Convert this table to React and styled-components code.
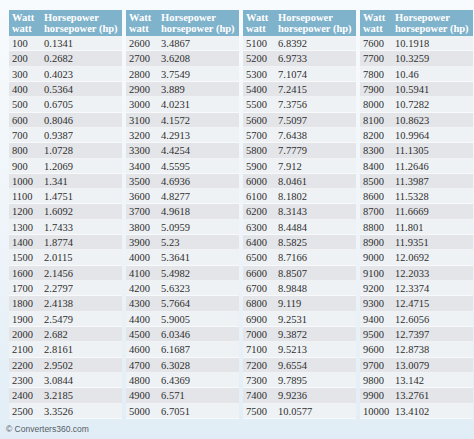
import React from 'react';
import styled, { createGlobalStyle } from 'styled-components';

const GlobalStyle = createGlobalStyle`
  html, body {
    margin: 0;
    padding: 0;
  }
  body {
    width: 474px;
    height: 439px;
    overflow: hidden;
  }
`;

const Page = styled.div`
  width: 474px;
  height: 439px;
  box-sizing: border-box;
  padding: 10px 0 0 9px;
  background: linear-gradient(180deg, #f8fbfd 0%, #eef4f9 55%, #e1edf6 100%);
  display: flex;
  flex-direction: column;
`;

const Tables = styled.div`
  display: flex;
  gap: 4px;
`;

const Table = styled.div`
  width: 113px;
  display: grid;
  grid-template-columns: 32px 1fr;
  font-family: 'Liberation Serif', 'Times New Roman', serif;
`;

const HeadCell = styled.div`
  background: #7fb2cb;
  color: #ffffff;
  font-weight: bold;
  font-size: 10.5px;
  line-height: 11px;
  padding: 2px 0 2px 3px;
  height: 26px;
  box-sizing: border-box;
  white-space: nowrap;
  display: flex;
  flex-direction: column;
  justify-content: center;
`;

const Cell = styled.div`
  height: 15.32px;
  line-height: 15.32px;
  font-size: 10.5px;
  color: #2e2e2e;
  padding-left: 3px;
  white-space: nowrap;
  background: ${(p) => (p.$alt ? '#e3e5e9' : '#eff2f5')};
  border-bottom: 1px solid rgba(255, 255, 255, 0.5);
  box-sizing: border-box;
`;

const Footer = styled.div`
  margin-top: 5px;
  margin-left: -3px;
  font-family: 'Liberation Sans', Arial, sans-serif;
  font-size: 8.5px;
  color: #555c63;
`;

const columns = [
  [
    ['100', '0.1341'], ['200', '0.2682'], ['300', '0.4023'], ['400', '0.5364'], ['500', '0.6705'],
    ['600', '0.8046'], ['700', '0.9387'], ['800', '1.0728'], ['900', '1.2069'], ['1000', '1.341'],
    ['1100', '1.4751'], ['1200', '1.6092'], ['1300', '1.7433'], ['1400', '1.8774'], ['1500', '2.0115'],
    ['1600', '2.1456'], ['1700', '2.2797'], ['1800', '2.4138'], ['1900', '2.5479'], ['2000', '2.682'],
    ['2100', '2.8161'], ['2200', '2.9502'], ['2300', '3.0844'], ['2400', '3.2185'], ['2500', '3.3526'],
  ],
  [
    ['2600', '3.4867'], ['2700', '3.6208'], ['2800', '3.7549'], ['2900', '3.889'], ['3000', '4.0231'],
    ['3100', '4.1572'], ['3200', '4.2913'], ['3300', '4.4254'], ['3400', '4.5595'], ['3500', '4.6936'],
    ['3600', '4.8277'], ['3700', '4.9618'], ['3800', '5.0959'], ['3900', '5.23'], ['4000', '5.3641'],
    ['4100', '5.4982'], ['4200', '5.6323'], ['4300', '5.7664'], ['4400', '5.9005'], ['4500', '6.0346'],
    ['4600', '6.1687'], ['4700', '6.3028'], ['4800', '6.4369'], ['4900', '6.571'], ['5000', '6.7051'],
  ],
  [
    ['5100', '6.8392'], ['5200', '6.9733'], ['5300', '7.1074'], ['5400', '7.2415'], ['5500', '7.3756'],
    ['5600', '7.5097'], ['5700', '7.6438'], ['5800', '7.7779'], ['5900', '7.912'], ['6000', '8.0461'],
    ['6100', '8.1802'], ['6200', '8.3143'], ['6300', '8.4484'], ['6400', '8.5825'], ['6500', '8.7166'],
    ['6600', '8.8507'], ['6700', '8.9848'], ['6800', '9.119'], ['6900', '9.2531'], ['7000', '9.3872'],
    ['7100', '9.5213'], ['7200', '9.6554'], ['7300', '9.7895'], ['7400', '9.9236'], ['7500', '10.0577'],
  ],
  [
    ['7600', '10.1918'], ['7700', '10.3259'], ['7800', '10.46'], ['7900', '10.5941'], ['8000', '10.7282'],
    ['8100', '10.8623'], ['8200', '10.9964'], ['8300', '11.1305'], ['8400', '11.2646'], ['8500', '11.3987'],
    ['8600', '11.5328'], ['8700', '11.6669'], ['8800', '11.801'], ['8900', '11.9351'], ['9000', '12.0692'],
    ['9100', '12.2033'], ['9200', '12.3374'], ['9300', '12.4715'], ['9400', '12.6056'], ['9500', '12.7397'],
    ['9600', '12.8738'], ['9700', '13.0079'], ['9800', '13.142'], ['9900', '13.2761'], ['10000', '13.4102'],
  ],
];

const App = () => (
  <Page>
    <GlobalStyle />
    <Tables>
      {columns.map((rows, t) => (
        <Table key={t}>
          <HeadCell>
            <span>Watt</span>
            <span>watt</span>
          </HeadCell>
          <HeadCell>
            <span>Horsepower</span>
            <span>horsepower (hp)</span>
          </HeadCell>
          {rows.map(([w, hp], i) => (
            <React.Fragment key={w}>
              <Cell $alt={i % 2 === 1}>{w}</Cell>
              <Cell $alt={i % 2 === 1}>{hp}</Cell>
            </React.Fragment>
          ))}
        </Table>
      ))}
    </Tables>
    <Footer>© Converters360.com</Footer>
  </Page>
);

export default App;
